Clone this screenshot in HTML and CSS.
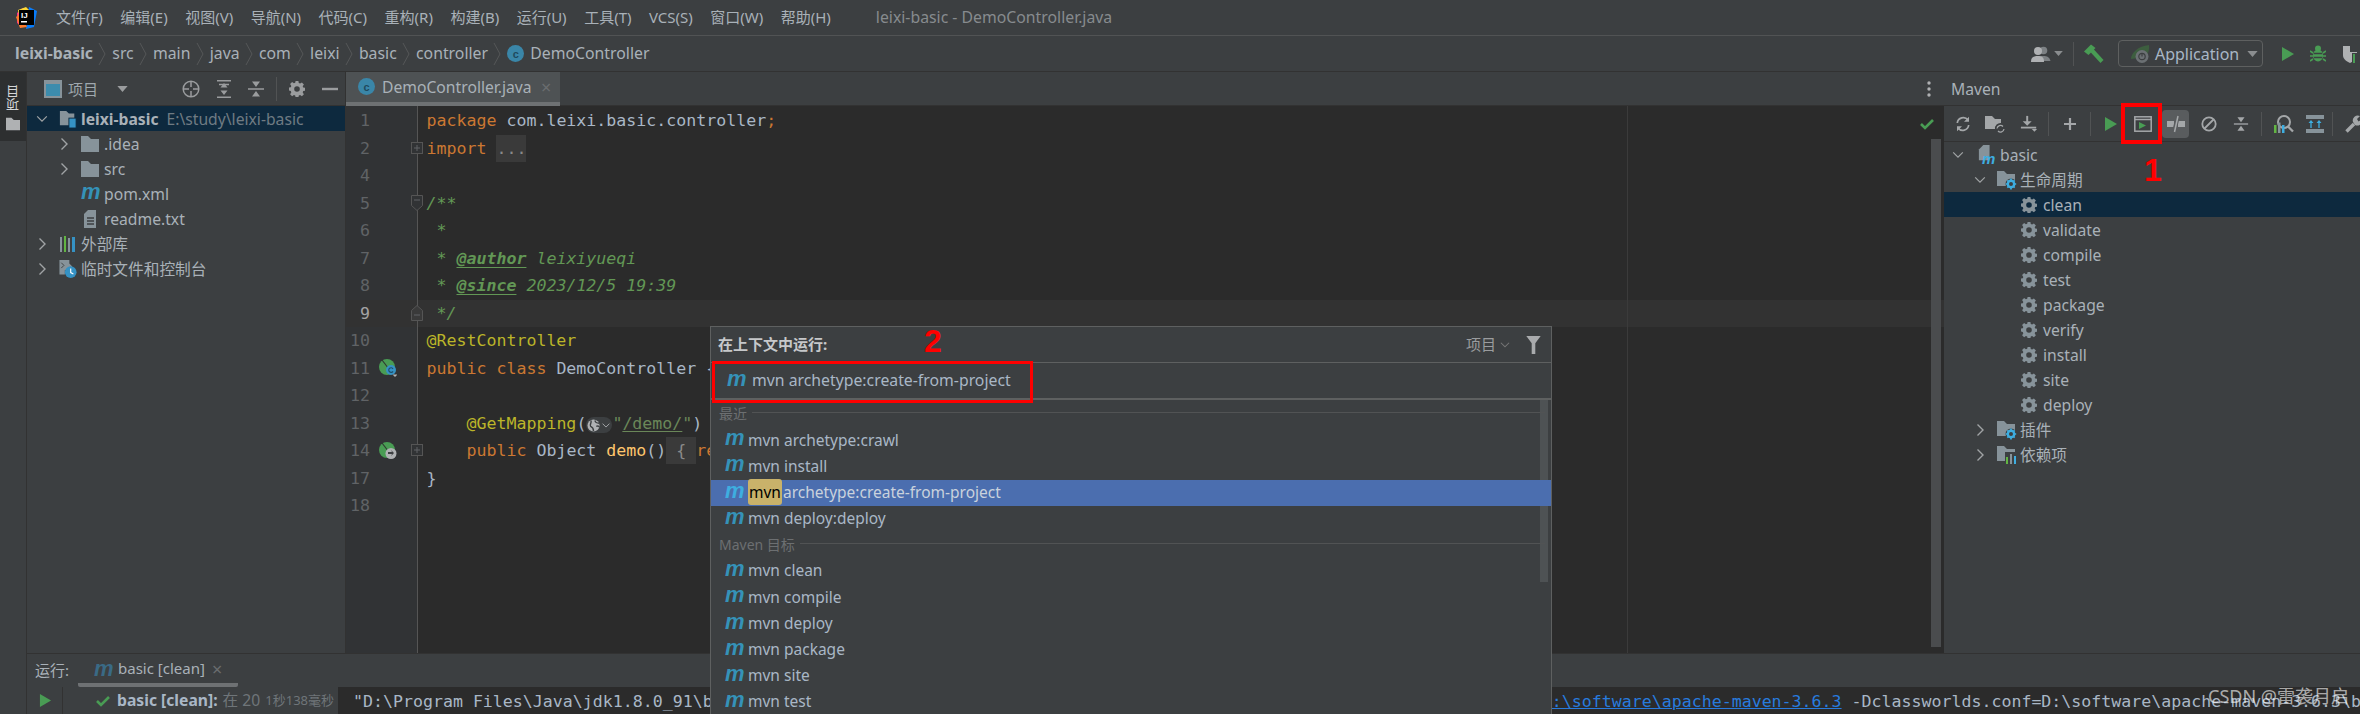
FILE: index.html
```html
<!DOCTYPE html>
<html lang="zh">
<head>
<meta charset="utf-8">
<title>leixi-basic - DemoController.java</title>
<link rel="stylesheet" href="styles.css">
</head>
<body>
<svg class="defs" aria-hidden="true">
  <symbol id="chev-r" viewBox="0 0 10 16"><path d="M2.5 2.5 8 8l-5.5 5.5" fill="none" stroke="currentColor" stroke-width="1.4"/></symbol>
  <symbol id="chev-d" viewBox="0 0 16 10"><path d="M2.5 2 8 7.5 13.500 2" fill="none" stroke="currentColor" stroke-width="1.4"/></symbol>
  <symbol id="crumb" viewBox="0 0 8 24"><path d="M1 1l6 11-6 11" fill="none" stroke="currentColor"/></symbol>
  <symbol id="folder" viewBox="0 0 18 18"><path d="M0 1h7l3 3h8v13H0z" fill="currentColor"/></symbol>
  <symbol id="module" viewBox="0 0 18 20"><path d="M0 1h7l3 3h6v13H0z" fill="#87939a"/><rect x="10" y="9" width="8" height="11" fill="#3592c4" stroke="#0d293e"/></symbol>
  <symbol id="file" viewBox="0 0 14 18"><path d="M5 0h8v18H1V4z" fill="#87939a"/><path d="M4 8h7M4 11h7M4 14h7" stroke="#3c3f41" stroke-width="1.300"/></symbol>
  <symbol id="libs" viewBox="0 0 18 18"><path d="M1 2h2v15H1z" fill="#87939a"/><path d="M5 1h2v16H5z" fill="#62b543"/><path d="M9 3h2v14H9z" fill="#87939a"/><path d="M13 2h3v15h-3z" fill="#3592c4"/></symbol>
  <symbol id="scratch" viewBox="0 0 19 20"><path d="M0 0h11v4l3 3v4H6v5H0z" fill="#87939a"/><path d="M2 3l3 3-3 3" fill="none" stroke="#3c3f41"/><circle cx="12.500" cy="13.500" r="6.500" fill="#3592c4"/><path d="M12.500 9.500v4.500l3 1.500" fill="none" stroke="#fff" stroke-width="1.300"/></symbol>
  <symbol id="gear" viewBox="0 0 16 16"><path fill="currentColor" fill-rule="evenodd" d="M6.600 0h2.800l.4 2.100 1.300.5 1.800-1.200 2 2-1.200 1.800.5 1.300 2.100.4v2.800l-2.100.4-.5 1.300 1.200 1.800-2 2-1.800-1.200-1.300.5-.4 2.100H6.600l-.4-2.100-1.300-.5-1.800 1.200-2-2 1.200-1.800-.5-1.300L-.3 9.400V6.600l2.100-.4.500-1.300L1.100 3.100l2-2 1.800 1.200 1.300-.5zM8 5.200a2.800 2.800 0 1 0 0 5.600 2.800 2.800 0 0 0 0-5.600z"/></symbol>
  <symbol id="lifecycle" viewBox="0 0 20 20"><path d="M0 1h7l3 3h8v12H0z" fill="#87939a"/><circle cx="14" cy="14" r="5.500" fill="#3c3f41"/><circle cx="14" cy="14" r="3.200" fill="none" stroke="#3eaee0" stroke-width="2.400"/><path d="M14 8.500v2M14 17.500v2M8.800 14h2M17.200 14h2M10.300 10.300l1.400 1.400M16.300 16.300l1.400 1.400M17.700 10.300l-1.400 1.400M11.700 16.300l-1.400 1.400" stroke="#3eaee0" stroke-width="1.700"/></symbol>
  <symbol id="deps" viewBox="0 0 20 20"><path d="M0 1h7l3 3h8v12H0z" fill="#87939a"/><rect x="8" y="7" width="12" height="13" fill="#3c3f41"/><path d="M9 12h2v7H9z" fill="#62b543"/><path d="M13 9h2v10h-2z" fill="#87939a"/><path d="M17 11h2v8h-2z" fill="#3eaee0"/></symbol>
  <symbol id="pom" viewBox="0 0 18 20"><path d="M6 0h7v17H1V5z" fill="#87939a"/></symbol>
  <symbol id="tree-win" viewBox="0 0 18 18"><rect width="18" height="18" fill="#87939a"/><rect x="2" y="4" width="14" height="12" fill="#3c8cad"/></symbol>
  <symbol id="locate" viewBox="0 0 18 18"><circle cx="9" cy="9" r="7.800" fill="none" stroke="currentColor" stroke-width="1.500"/><path d="M9 1v6M9 11v6M1 9h6M11 9h6" stroke="currentColor" stroke-width="1.500"/></symbol>
  <symbol id="expand" viewBox="0 0 16 18"><path d="M1 .8h14M1 17.200h14M3 4.500h10" stroke="currentColor" stroke-width="1.500"/><path d="M8 3 4.500 7.500h7zM8 15l-3.500-4.500h7z" fill="currentColor"/></symbol>
  <symbol id="collapse" viewBox="0 0 16 18"><path d="M0 9h16" stroke="currentColor" stroke-width="1.500"/><path d="M8 7 4 1.500h8zM8 11l-4 5.500h8z" fill="currentColor"/></symbol>
  <symbol id="minus" viewBox="0 0 16 4"><rect y=".8" width="16" height="2.400" fill="currentColor"/></symbol>
  <symbol id="dots" viewBox="0 0 4 16"><circle cx="2" cy="2" r="1.700" fill="currentColor"/><circle cx="2" cy="8" r="1.700" fill="currentColor"/><circle cx="2" cy="14" r="1.700" fill="currentColor"/></symbol>
  <symbol id="check" viewBox="0 0 14 12"><path d="M1 6l4 4 8-8" fill="none" stroke="#499c54" stroke-width="2.600"/></symbol>
  <symbol id="play" viewBox="0 0 14 16"><path d="M1 1l12 7-12 7z" fill="#499c54"/></symbol>
  <symbol id="sync" viewBox="0 0 16 16"><path d="M2.300 7A6 6 0 0 1 13 4M13.700 9A6 6 0 0 1 3 12" fill="none" stroke="currentColor" stroke-width="1.700"/><path d="M14 .7v5h-5zM2 15.300v-5h5z" fill="currentColor"/></symbol>
  <symbol id="folder-sync" viewBox="0 0 20 18"><path d="M0 1h7l3 3h6v4a5.500 5.500 0 0 0-6 6H0z" fill="currentColor"/><path d="M12 13.500a3.500 3.500 0 0 1 6-2M19 14a3.500 3.500 0 0 1-6 2" fill="none" stroke="currentColor" stroke-width="1.200"/></symbol>
  <symbol id="download" viewBox="0 0 20 20"><path d="M8 1v8" stroke="currentColor" stroke-width="2.200"/><path d="M3 7h10l-5 5z" fill="currentColor"/><path d="M1 14h17" stroke="currentColor" stroke-width="2"/><path d="M13 15.500h6l-3 3z" fill="currentColor"/></symbol>
  <symbol id="plus" viewBox="0 0 14 14"><path d="M7 1v12M1 7h12" stroke="currentColor" stroke-width="2.200"/></symbol>
  <symbol id="exec" viewBox="0 0 18 16"><rect x=".8" y=".8" width="16.400" height="14.400" fill="none" stroke="currentColor" stroke-width="1.500"/><path d="M1 3.500h16" stroke="currentColor" stroke-width="1.500"/><path d="M5 6l7 3.500-7 3.500z" fill="#499c54"/></symbol>
  <symbol id="toggle" viewBox="0 0 18 18"><path d="M0 6h7v6H0zM11 6h7v6h-7z" fill="currentColor"/><path d="M7 17 11 1" stroke="#595c5e" stroke-width="4"/><path d="M7.500 17 11 1" stroke="currentColor" stroke-width="1.500"/></symbol>
  <symbol id="skip" viewBox="0 0 16 16"><circle cx="8" cy="8" r="6.700" fill="none" stroke="currentColor" stroke-width="1.800"/><path d="M3.500 12.500l9-9" stroke="currentColor" stroke-width="1.800"/></symbol>
  <symbol id="analyze" viewBox="0 0 20 20"><circle cx="10" cy="8" r="6" fill="none" stroke="currentColor" stroke-width="2"/><path d="M14 12.500l5 5" stroke="currentColor" stroke-width="2.300"/><rect x="0" y="11" width="2.500" height="8" fill="#62b543"/><rect x="4" y="8.500" width="2.500" height="10.500" fill="#87939a"/><rect x="8" y="11" width="2.500" height="8" fill="#3eaee0"/></symbol>
  <symbol id="align" viewBox="0 0 18 18"><rect width="18" height="4" fill="#87939a"/><rect y="14" width="18" height="4" fill="#87939a"/><path d="M5 6.500V13M13 6.500V13" stroke="#3eaee0" stroke-width="1.300"/><path d="M5 5l-2.500 3h5zM13 5l-2.500 3h5z" fill="#3eaee0"/></symbol>
  <symbol id="wrench" viewBox="0 0 18 18"><path d="M1.500 16.500 9 9" stroke="currentColor" stroke-width="3.400"/><path d="M8 7a5 5 0 0 1 7-6l-3 3 1.500 2.500L17 4a5 5 0 0 1-7 6z" fill="currentColor"/></symbol>
  <symbol id="user" viewBox="0 0 20 16"><circle cx="12.500" cy="4.500" r="3.800" fill="#7d8184"/><path d="M7 15c0-4 2-5 5.500-5s6 1 7 5z" fill="#7d8184"/><circle cx="7" cy="5" r="4" fill="currentColor"/><path d="M0 16c0-5 3-6 7-6s6 1 6 6z" fill="currentColor"/></symbol>
  <symbol id="hammer" viewBox="0 0 20 20"><path d="M7 5.500l11 12" stroke="#499c54" stroke-width="4.200"/><path d="M0 7.500 7 .5l4.500 3.500-7 7z" fill="#499c54"/></symbol>
  <symbol id="bug" viewBox="0 0 16 18"><ellipse cx="8" cy="10.500" rx="5" ry="6" fill="#499c54"/><circle cx="8" cy="3.500" r="3" fill="#499c54"/><path d="M0 6l3 2M16 6l-3 2M0 11h3M16 11h-3M0 16l3-2M16 16l-3-2" stroke="#499c54" stroke-width="1.600"/><path d="M4 8.500h8M4 12.500h8" stroke="#3c3f41" stroke-width="1.300"/></symbol>
  <symbol id="shield" viewBox="0 0 18 20"><path d="M1 2h14v9c0 4-3 6-7 8-4-2-7-4-7-8z" fill="#afb1b3"/><path d="M8 2h7v6H8z" fill="#3c3f41"/><path d="M10 9h8v11h-8z" fill="#3c3f41"/><path d="M12 10v9" stroke="#499c54" stroke-width="2"/></symbol>
  <symbol id="gutter-class" viewBox="0 0 18 18"><circle cx="8" cy="8" r="8" fill="#499c54"/><path d="M3 1l10 13" stroke="#2f3a30" stroke-width="1.200"/><circle cx="12" cy="11" r="5" fill="#3592c4"/><path d="M14 9.800a2.300 2.300 0 1 0 0 2.500" fill="none" stroke="#1f4f6a" stroke-width="1.200"/><path d="M13.500 15.500h5l-2.500 2.500z" fill="#afb1b3"/></symbol>
  <symbol id="gutter-web" viewBox="0 0 18 18"><circle cx="8" cy="8" r="8" fill="#499c54"/><path d="M3 1l10 13" stroke="#2f3a30" stroke-width="1.200"/><circle cx="12" cy="11.500" r="5.500" fill="#afb1b3"/><path d="M9 10h4l-1-2 3 3-3 3 1-2H9z" fill="#3c3f41"/></symbol>
  <symbol id="globe" viewBox="0 0 14 14"><circle cx="7" cy="7" r="6.500" fill="#afb1b3"/><path d="M4 1.500C6 4 2 6 4 8c2 1 3 2 3 5M9 1.500c-1 2 2 3 4 3M10 8c2-1 3 0 3 1" fill="none" stroke="#3c3f41" stroke-width="1.500"/></symbol>
  <symbol id="funnel" viewBox="0 0 16 20"><path d="M0 0h16L10 8v12H6V8z" fill="currentColor"/></symbol>
  <symbol id="caret" viewBox="0 0 12 7"><path d="M0 0h12L6 7z" fill="currentColor"/></symbol>
  <symbol id="fold-plus" viewBox="0 0 12 12"><rect x=".5" y=".5" width="11" height="11" fill="#313335" stroke="#555"/><path d="M3 6h6M6 3v6" stroke="#606366"/></symbol>
  <symbol id="fold-start" viewBox="0 0 12 16"><path d="M.5.500h11v10L6 15.500.5 10.500z" fill="#313335" stroke="#555"/><path d="M3 5h6" stroke="#606366"/></symbol>
  <symbol id="fold-end" viewBox="0 0 12 16"><path d="M.5 15.500h11v-10L6 .5.5 5.500z" fill="#3a3a3a" stroke="#555"/><path d="M3 10h6" stroke="#606366"/></symbol>
  <symbol id="spring-run" viewBox="0 0 20 18"><path d="M0 14C0 8 7 1 18 0c1 8-3 13-10 13z" fill="#3d5e3f"/><circle cx="11" cy="11.500" r="6.500" fill="#6b7073"/><circle cx="11" cy="11.500" r="3.200" fill="none" stroke="#3c3f41" stroke-width="1.200"/><path d="M11 8.500v3" stroke="#3c3f41" stroke-width="1.200"/></symbol>
</svg>

<div class="app">
  <header class="menubar">
    <svg class="logo" viewBox="0 0 22 22" aria-hidden="true">
      <path d="M2 6 8 1l6 2-8 16-4-3z" fill="#fc318c"/>
      <path d="M14 0l8 4-3 16-8 2z" fill="#087cfa"/>
      <path d="M1 10l5-4 6 14-7 1z" fill="#fe7b2e"/>
      <path d="M3 3l8-3 4 4-11 5z" fill="#fdd935"/>
      <rect x="4" y="3" width="15" height="15" fill="#000"/>
      <text x="6" y="11" class="logo-text">IJ</text>
      <rect x="6" y="14" width="6" height="1.500" fill="#fff"/>
    </svg>
    <nav class="menu">
      <span>文件(F)</span><span>编辑(E)</span><span>视图(V)</span><span>导航(N)</span><span>代码(C)</span><span>重构(R)</span><span>构建(B)</span><span>运行(U)</span><span>工具(T)</span><span>VCS(S)</span><span>窗口(W)</span><span>帮助(H)</span>
    </nav>
    <span class="win-title">leixi-basic - DemoController.java</span>
  </header>

  <div class="navbar">
    <div class="crumbs">
      <b class="crumb-root">leixi-basic</b>
      <svg class="crumb-sep"><use href="#crumb"/></svg><span>src</span>
      <svg class="crumb-sep"><use href="#crumb"/></svg><span>main</span>
      <svg class="crumb-sep"><use href="#crumb"/></svg><span>java</span>
      <svg class="crumb-sep"><use href="#crumb"/></svg><span>com</span>
      <svg class="crumb-sep"><use href="#crumb"/></svg><span>leixi</span>
      <svg class="crumb-sep"><use href="#crumb"/></svg><span>basic</span>
      <svg class="crumb-sep"><use href="#crumb"/></svg><span>controller</span>
      <svg class="crumb-sep"><use href="#crumb"/></svg><i class="class-ic">c</i><span class="crumb-class">DemoController</span>
    </div>
    <div class="run-tools">
      <svg class="ic-user"><use href="#user"/></svg>
      <svg class="ic-caret"><use href="#caret"/></svg>
      <span class="tool-sep"></span>
      <svg class="ic-hammer"><use href="#hammer"/></svg>
      <div class="run-config">
        <svg class="ic-spring"><use href="#spring-run"/></svg>
        <span>Application</span>
        <svg class="ic-caret"><use href="#caret"/></svg>
      </div>
      <svg class="ic-run"><use href="#play"/></svg>
      <svg class="ic-bug"><use href="#bug"/></svg>
      <svg class="ic-shield"><use href="#shield"/></svg>
    </div>
  </div>

  <div class="body">
    <aside class="stripe">
      <div class="stripe-tab">
        <span class="stripe-label">项目</span>
        <svg class="stripe-folder"><use href="#folder"/></svg>
      </div>
    </aside>

    <div class="content">
      <div class="workspace">
        <section class="project">
          <div class="proj-head">
            <svg class="ph-win"><use href="#tree-win"/></svg>
            <span class="ph-title">项目</span>
            <svg class="ph-caret"><use href="#caret"/></svg>
            <svg class="ph-ic ph-locate"><use href="#locate"/></svg>
            <svg class="ph-ic ph-exp"><use href="#expand"/></svg>
            <svg class="ph-ic ph-col"><use href="#collapse"/></svg>
            <span class="ph-sep"></span>
            <svg class="ph-ic ph-gear"><use href="#gear"/></svg>
            <svg class="ph-minus"><use href="#minus"/></svg>
          </div>
          <div class="ptree">
            <div class="prow sel"><svg class="chev chev-down"><use href="#chev-d"/></svg><svg class="pic"><use href="#module"/></svg><b class="pname">leixi-basic</b><span class="ppath">E:\study\leixi-basic</span></div>
            <div class="prow lv1"><svg class="chev"><use href="#chev-r"/></svg><svg class="pic"><use href="#folder"/></svg><span class="dotname">.idea</span></div>
            <div class="prow lv1"><svg class="chev"><use href="#chev-r"/></svg><svg class="pic"><use href="#folder"/></svg><span class="dotname">src</span></div>
            <div class="prow lv1"><span class="chev"></span><span class="m m-tree">m</span><span class="dotname">pom.xml</span></div>
            <div class="prow lv1"><span class="chev"></span><svg class="pic"><use href="#file"/></svg><span class="dotname">readme.txt</span></div>
            <div class="prow"><svg class="chev"><use href="#chev-r"/></svg><svg class="pic"><use href="#libs"/></svg><span class="ptext">外部库</span></div>
            <div class="prow"><svg class="chev"><use href="#chev-r"/></svg><svg class="pic"><use href="#scratch"/></svg><span class="ptext">临时文件和控制台</span></div>
          </div>
        </section>

        <section class="editor-col">
          <div class="tabbar">
            <div class="tab"><i class="class-ic">c</i><span class="tab-name">DemoController.java</span><span class="tab-x">×</span></div>
            <svg class="ic-dots"><use href="#dots"/></svg>
          </div>
          <div class="editor">
            <div class="gutter">
              <div class="gl"><span class="ln">1</span></div>
              <div class="gl"><span class="ln">2</span><svg class="fold"><use href="#fold-plus"/></svg></div>
              <div class="gl"><span class="ln">4</span></div>
              <div class="gl"><span class="ln">5</span><svg class="fold fold-tall"><use href="#fold-start"/></svg></div>
              <div class="gl"><span class="ln">6</span></div>
              <div class="gl"><span class="ln">7</span></div>
              <div class="gl"><span class="ln">8</span></div>
              <div class="gl cur"><span class="ln">9</span><svg class="fold fold-tall"><use href="#fold-end"/></svg></div>
              <div class="gl"><span class="ln">10</span></div>
              <div class="gl"><span class="ln">11</span><svg class="gmark"><use href="#gutter-class"/></svg></div>
              <div class="gl"><span class="ln">12</span></div>
              <div class="gl"><span class="ln">13</span></div>
              <div class="gl"><span class="ln">14</span><svg class="gmark"><use href="#gutter-web"/></svg><svg class="fold"><use href="#fold-plus"/></svg></div>
              <div class="gl"><span class="ln">17</span></div>
              <div class="gl"><span class="ln">18</span></div>
            </div>
            <div class="code">
              <div class="cl"><span class="kw">package</span> com.leixi.basic.controller<span class="kw">;</span></div>
              <div class="cl"><span class="kw">import</span> <span class="foldchip">...</span></div>
              <div class="cl"></div>
              <div class="cl cm">/**</div>
              <div class="cl cm"> *</div>
              <div class="cl cm"> * <span class="tag">@author</span> leixiyueqi</div>
              <div class="cl cm"> * <span class="tag">@since</span> 2023/12/5 19:39</div>
              <div class="cl cm cur"> */</div>
              <div class="cl ann">@RestController</div>
              <div class="cl"><span class="kw">public class</span> DemoController {</div>
              <div class="cl"></div>
              <div class="cl">    <span class="ann">@GetMapping</span>(<span class="chip"><svg class="chip-globe"><use href="#globe"/></svg><svg class="chip-chev"><use href="#chev-d"/></svg></span><span class="str">"<u>/demo/</u>"</span>)</div>
              <div class="cl">    <span class="kw">public</span> Object <span class="fn">demo</span>()<span class="foldchip"> { </span><span class="kw">return</span> <span class="str">"demo"</span>; }</div>
              <div class="cl">}</div>
              <div class="cl"></div>
            </div>
            <div class="margin-line"></div>
            <svg class="ok-mark"><use href="#check"/></svg>
            <div class="ed-scroll"></div>
          </div>
        </section>

        <section class="maven">
          <div class="mv-head"><span>Maven</span></div>
          <div class="mv-tools">
            <svg class="mt"><use href="#sync"/></svg>
            <svg class="mt mt-wide"><use href="#folder-sync"/></svg>
            <svg class="mt mt-wide"><use href="#download"/></svg>
            <span class="mt-sep"></span>
            <svg class="mt mt-plus"><use href="#plus"/></svg>
            <span class="mt-sep"></span>
            <svg class="mt mt-play"><use href="#play"/></svg>
            <svg class="mt mt-exec"><use href="#exec"/></svg>
            <span class="mt-on"><svg class="mt-toggle"><use href="#toggle"/></svg></span>
            <svg class="mt mt-skip"><use href="#skip"/></svg>
            <svg class="mt mt-col"><use href="#collapse"/></svg>
            <span class="mt-sep"></span>
            <svg class="mt mt-an"><use href="#analyze"/></svg>
            <svg class="mt mt-al"><use href="#align"/></svg>
            <span class="mt-sep"></span>
            <svg class="mt mt-wr"><use href="#wrench"/></svg>
          </div>
          <div class="mtree">
            <div class="mrow m0"><svg class="chev chev-down"><use href="#chev-d"/></svg><span class="pom-ic"><svg class="pom-file"><use href="#pom"/></svg><span class="m m-pom">m</span></span><span class="mtext">basic</span></div>
            <div class="mrow m1"><svg class="chev chev-down"><use href="#chev-d"/></svg><svg class="mfolder"><use href="#lifecycle"/></svg><span class="mtext">生命周期</span></div>
            <div class="mrow m2 sel"><svg class="mgear"><use href="#gear"/></svg><span class="mtext">clean</span></div>
            <div class="mrow m2"><svg class="mgear"><use href="#gear"/></svg><span class="mtext">validate</span></div>
            <div class="mrow m2"><svg class="mgear"><use href="#gear"/></svg><span class="mtext">compile</span></div>
            <div class="mrow m2"><svg class="mgear"><use href="#gear"/></svg><span class="mtext">test</span></div>
            <div class="mrow m2"><svg class="mgear"><use href="#gear"/></svg><span class="mtext">package</span></div>
            <div class="mrow m2"><svg class="mgear"><use href="#gear"/></svg><span class="mtext">verify</span></div>
            <div class="mrow m2"><svg class="mgear"><use href="#gear"/></svg><span class="mtext">install</span></div>
            <div class="mrow m2"><svg class="mgear"><use href="#gear"/></svg><span class="mtext">site</span></div>
            <div class="mrow m2"><svg class="mgear"><use href="#gear"/></svg><span class="mtext">deploy</span></div>
            <div class="mrow m1"><svg class="chev"><use href="#chev-r"/></svg><svg class="mfolder"><use href="#lifecycle"/></svg><span class="mtext">插件</span></div>
            <div class="mrow m1"><svg class="chev"><use href="#chev-r"/></svg><svg class="mfolder"><use href="#deps"/></svg><span class="mtext">依赖项</span></div>
          </div>
        </section>
      </div>

      <section class="bottom">
        <div class="run-head">
          <span class="run-label">运行:</span>
          <div class="run-tab"><span class="m m-run">m</span><span>basic [clean]</span><span class="tab-x">×</span></div>
        </div>
        <div class="run-body">
          <div class="run-gutter"><svg class="rg-play"><use href="#play"/></svg></div>
          <div class="run-tree"><svg class="rt-check"><use href="#check"/></svg><b>basic [clean]:</b><span class="rt-time">在 20</span><span class="rt-dur">1秒138毫秒</span></div>
          <div class="console">"D:\Program Files\Java\jdk1.8.0_91\bin\java.exe" -Dmaven.multiModuleProjectDirectory=E:\study\leixi-basic -Dmaven.home=<a class="link">D:\software\apache-maven-3.6.3</a> -Dclassworlds.conf=D:\software\apache-maven-3.6.3\bin\m2.conf</div>
        </div>
      </section>
    </div>
  </div>

  <div class="popup">
    <div class="pop-head"><b class="pop-title">在上下文中运行:</b><span class="pop-scope">项目</span><svg class="pop-chev"><use href="#chev-d"/></svg><svg class="pop-funnel"><use href="#funnel"/></svg></div>
    <div class="pop-search"><span class="m m-search">m</span><span>mvn archetype:create-from-project</span></div>
    <div class="pop-scroll"></div>
    <div class="pop-list">
      <div class="pop-group"><span>最近</span><i></i></div>
      <div class="pop-row"><span class="m">m</span><span>mvn archetype:crawl</span></div>
      <div class="pop-row"><span class="m">m</span><span>mvn install</span></div>
      <div class="pop-row active"><span class="m">m</span><span><mark>mvn</mark> archetype:create-from-project</span></div>
      <div class="pop-row"><span class="m">m</span><span>mvn deploy:deploy</span></div>
      <div class="pop-group"><span>Maven 目标</span><i></i></div>
      <div class="pop-row"><span class="m">m</span><span>mvn clean</span></div>
      <div class="pop-row"><span class="m">m</span><span>mvn compile</span></div>
      <div class="pop-row"><span class="m">m</span><span>mvn deploy</span></div>
      <div class="pop-row"><span class="m">m</span><span>mvn package</span></div>
      <div class="pop-row"><span class="m">m</span><span>mvn site</span></div>
      <div class="pop-row"><span class="m">m</span><span>mvn test</span></div>
    </div>
  </div>

  <div class="mark-box box-1"></div>
  <div class="mark-num num-1">1</div>
  <div class="mark-box box-2"></div>
  <div class="mark-num num-2">2</div>
  <div class="watermark">CSDN @雷袭月启</div>
</div>
</body>
</html>
```

FILE: styles.css
```css
* { box-sizing: border-box; }
html, body { margin: 0; padding: 0; }
body { background: #3c3f41; }
.defs { position: absolute; width: 0; height: 0; }
.app {
  position: relative;
  width: 2360px;
  height: 714px;
  overflow: hidden;
  display: flex;
  flex-direction: column;
  background: #3c3f41;
  color: #a9b1b8;
  font: 15.7px/1 "Noto Sans", "Noto Sans CJK SC", sans-serif;
}
svg { display: block; flex: none; }
u { text-underline-offset: 2px; }

/* menu */
.menubar {
  height: 36px;
  flex: none;
  display: flex;
  align-items: center;
  border-bottom: 1px solid #515354;
  padding-left: 15px;
}
.logo { width: 22px; height: 22px; }
.logo-text { font: bold 8px "Liberation Sans", sans-serif; fill: #fff; }
.menu { display: flex; gap: 17.5px; margin-left: 19px; font-size: 15px; }
.win-title { margin-left: 45px; font-size: 15.8px; color: #878b8e; }

/* nav bar */
.navbar {
  height: 36px;
  flex: none;
  display: flex;
  align-items: center;
  justify-content: space-between;
  border-bottom: 1px solid #323232;
  padding-left: 15px;
}
.crumbs { display: flex; align-items: center; font-size: 15.8px; }
.crumb-root { font-weight: 700; }
.crumb-sep { width: 8px; height: 24px; margin: 0 6px 0 5.3px; color: #555758; }
.class-ic {
  width: 17px; height: 17px;
  border-radius: 50%;
  background: #3a86a8;
  color: #1f4a5e;
  display: flex; align-items: center; justify-content: center;
  font: 700 11px "Liberation Sans", sans-serif;
  flex: none;
}
.crumb-class { margin-left: 6px; }
.run-tools { display: flex; align-items: center; width: 329px; height: 100%; overflow: hidden; flex: none; }
.ic-user { width: 20px; height: 16px; color: #afb1b3; }
.ic-caret { width: 9px; height: 5px; color: #8a8d8f; }
.run-tools > .ic-caret { margin-left: 3px; }
.tool-sep { width: 1px; height: 24px; background: #515354; margin-left: 10px; }
.ic-hammer { width: 20px; height: 20px; margin-left: 10px; }
.run-config {
  width: 152px; height: 27px;
  margin-left: 14px;
  border: 1px solid #5e6060;
  border-radius: 4px;
  display: flex; align-items: center;
  padding-left: 12px;
  color: #a9b7c6;
  font-size: 16px;
}
.run-config span { margin-left: 4px; width: 84px; }
.run-config .ic-caret { width: 11px; height: 6px; margin-left: 8px; }
.ic-spring { width: 20px; height: 18px; }
.ic-run { width: 14px; height: 16px; margin-left: 18px; }
.ic-bug { width: 16px; height: 18px; margin-left: 15px; }
.ic-shield { width: 18px; height: 20px; margin-left: 16px; }

/* body */
.body { flex: 1; min-height: 0; display: flex; }
.stripe { width: 27px; flex: none; border-right: 1px solid #323232; }
.stripe-tab {
  height: 69px;
  background: #2d2f30;
  display: flex; flex-direction: column; align-items: center;
  padding-top: 13px;
  color: #d4d6d8;
}
.stripe-label { writing-mode: vertical-rl; transform: rotate(180deg); font-size: 13px; line-height: 14px; }
.stripe-folder { width: 14px; height: 14px; margin-top: 6px; color: #afb1b3; }
.content { flex: 1; min-width: 0; display: flex; flex-direction: column; }
.workspace { height: 581px; flex: none; display: flex; min-height: 0; }

/* project */
.project { width: 319px; flex: none; border-right: 1px solid #323232; }
.proj-head {
  height: 34px;
  display: flex; align-items: center;
  padding-left: 17px;
  border-bottom: 1px solid #323232;
}
.ph-win { width: 18px; height: 18px; }
.ph-title { margin-left: 6px; font-size: 15px; color: #9fa8ae; padding-top: 2px; }
.ph-caret { width: 11px; height: 6px; margin-left: 19px; color: #9a9c9e; }
.ph-ic { width: 18px; height: 18px; color: #9a9c9e; }
.ph-locate { margin-left: 54px; }
.ph-exp { width: 16px; margin-left: 16px; }
.ph-col { width: 16px; margin-left: 16px; }
.ph-sep { width: 1px; height: 24px; background: #515354; margin-left: 12px; }
.ph-gear { width: 16px; height: 16px; margin-left: 12px; }
.ph-minus { width: 16px; height: 4px; margin-left: 17px; color: #9a9c9e; }
.prow { height: 25px; display: flex; align-items: center; padding-left: 10px; }
.prow.sel { background: #0d293e; }
.prow.lv1 { padding-left: 32px; }
.chev { width: 10px; height: 16px; color: #a0a3a5; flex: none; }
.chev-down { width: 14px; height: 10px; margin: 0 -2px; }
.pic { width: 18px; height: 18px; margin: 0 4px 0 12px; color: #87939a; }
.pname { font-weight: 700; padding-top: 2px; }
.ppath { margin-left: 8px; color: #6f7b83; padding-top: 2px; }
.ptext { padding-top: 2px; }
.dotname { margin-left: 1px; padding-top: 2px; }
.m {
  font: italic 700 22px/1 "Liberation Sans", sans-serif;
  color: #3592b8;
  letter-spacing: -1px;
  width: 18px;
  flex: none;
  display: block;
  position: relative;
  top: -2px;
}
.m-tree { margin: 0 4px 0 12px; }

/* editor */
.editor-col { flex: 1; min-width: 0; display: flex; flex-direction: column; }
.tabbar { height: 34px; flex: none; display: flex; align-items: center; justify-content: space-between; border-bottom: 1px solid #323232; padding-right: 13px; }
.tab {
  width: 214px; height: 34px;
  display: flex; align-items: center;
  padding-left: 12px;
  background: #4e5254;
  border-bottom: 4px solid #6e7173;
}
.tab-name { margin-left: 7px; width: 153px; white-space: nowrap; padding-top: 3px; }
.tab-x { color: #6a6d6f; font-size: 18px; margin-left: 6px; }
.ic-dots { width: 4px; height: 16px; color: #afb1b3; }
.editor { flex: 1; position: relative; display: flex; min-height: 0; background: #2b2b2b; font: 16.6px/27.5px "DejaVu Sans Mono", monospace; }
.gutter { width: 72px; flex: none; background: #313335; border-right: 1px solid #555; color: #606366; padding-top: 1px; }
.gl { height: 27.5px; display: flex; align-items: center; position: relative; }
.gl.cur { background: #323232; color: #a4a3a3; }
.ln { width: 24px; text-align: right; }
.gmark { width: 18px; height: 18px; margin-left: 9px; }
.fold { width: 12px; height: 12px; position: absolute; right: -6px; top: 7px; z-index: 2; }
.fold-tall { height: 16px; top: 5px; }
.code { flex: 1; min-width: 0; color: #a9b7c6; overflow: hidden; padding-top: 1px; }
.cl { height: 27.5px; padding-left: 8.5px; white-space: pre; }
.cl.cur { background: #323232; }
.kw { color: #cc7832; }
.ann { color: #bbb529; }
.cm { color: #629755; font-style: italic; }
.tag { font-weight: 700; text-decoration: underline; text-underline-offset: 3px; }
.str { color: #6a8759; }
.fn { color: #ffc66d; }
.foldchip { background: #3a3a3a; color: #8a8a8a; display: inline-block; height: 27px; }
.chip { display: inline-flex; align-items: center; vertical-align: -3px; width: 26px; height: 16px; background: #3c3f41; border-radius: 8px; padding-left: 1px; }
.chip-globe { width: 13px; height: 13px; }
.chip-chev { width: 10px; height: 7px; margin-left: 1px; color: #afb1b3; }
.margin-line { position: absolute; left: 1281px; top: 0; bottom: 0; width: 1px; background: #3b3b3b; }
.ok-mark { position: absolute; right: 10px; top: 12px; width: 14px; height: 12px; }
.ed-scroll { position: absolute; right: 3px; top: 33px; bottom: 6px; width: 10px; background: #4a4c4e; }

/* maven */
.maven { width: 416px; flex: none; }
.mv-head { height: 34px; display: flex; align-items: center; padding-left: 7px; color: #a9b1b8; border-bottom: 1px solid #323232; }
.mv-head span { padding-top: 2px; }
.mv-tools { height: 36px; display: flex; align-items: center; padding-left: 11px; color: #a4a7a9; border-bottom: 1px solid #323232; overflow: hidden; }
.mt { width: 16px; height: 16px; }
.mt-wide { width: 20px; height: 18px; margin-left: 14px; }
.mt-sep { width: 1px; height: 24px; background: #515354; flex: none; }
.mv-tools .mt-wide + .mt-sep { margin-left: 9px; }
.mt-plus { width: 14px; height: 14px; margin: 0 13px 0 14px; }
.mt-play { width: 14px; height: 16px; margin-left: 13px; }
.mt-exec { width: 18px; height: 16px; margin-left: 16px; }
.mt-on { width: 27px; height: 28px; margin-left: 10px; border-radius: 4px; background: #595c5e; display: flex; align-items: center; justify-content: center; flex: none; }
.mt-toggle { width: 18px; height: 18px; }
.mt-skip { margin-left: 12px; }
.mt-col { margin-left: 16px; }
.mt-col + .mt-sep { margin-left: 12px; }
.mt-an { width: 20px; height: 20px; margin-left: 12px; }
.mt-al { width: 18px; height: 18px; margin-left: 12px; }
.mt-al + .mt-sep { margin-left: 8px; }
.mt-wr { width: 18px; height: 18px; margin-left: 12px; }
.mrow { height: 25px; display: flex; align-items: center; color: #a9b1b8; }
.mrow.sel { background: #0d293e; }
.m0 { padding-left: 9px; }
.m1 { padding-left: 31px; }
.m2 { padding-left: 77px; }
.pom-ic { width: 18px; height: 20px; margin: 0 4px 0 15px; position: relative; flex: none; }
.pom-file { width: 16px; height: 18px; }
.m-pom { position: absolute; left: 4px; top: 6px; font-size: 15px; width: 14px; letter-spacing: 0; color: #3eaee0; }
.mtext { padding-top: 2px; }
.mfolder { width: 20px; height: 20px; margin: 0 3px 0 12px; }
.mgear { width: 16px; height: 16px; margin-right: 6px; color: #87939a; }

/* bottom */
.bottom { flex: 1; min-height: 0; border-top: 1px solid #323232; display: flex; flex-direction: column; }
.run-head { height: 33px; flex: none; display: flex; font-size: 15px; }
.run-label { margin-left: 8px; width: 43px; align-self: center; }
.run-tab { width: 160px; display: flex; align-items: center; padding-left: 16px; border-bottom: 4px solid #6e7173; border-radius: 0 0 2px 2px; }
.m-run { color: #3a6a85; margin-right: 6px; top: 0; }
.run-tab .tab-x { margin-left: 7px; }
.run-body { flex: 1; min-height: 0; display: flex; }
.run-gutter { width: 36px; flex: none; border-right: 1px solid #323232; display: flex; align-items: center; padding-left: 12px; }
.rg-play { width: 13px; height: 15px; }
.run-tree { width: 275px; flex: none; display: flex; align-items: center; padding-left: 33px; white-space: nowrap; }
.rt-check { width: 14px; height: 12px; margin-right: 7px; }
.run-tree b { color: #a9b7c6; }
.rt-time { margin-left: 5px; color: #6f7579; }
.rt-dur { margin-left: 5px; font-size: 13px; color: #6f7579; }
.console {
  flex: 1; min-width: 0;
  background: #2b2b2b;
  padding-left: 15px;
  white-space: pre;
  overflow: hidden;
  font: 16.6px/29px "DejaVu Sans Mono", monospace;
  color: #a9b7c6;
}
.link { color: #287bde; text-decoration: underline; }

/* popup */
.popup {
  position: absolute;
  left: 710px; top: 326px;
  width: 842px; height: 400px;
  background: #3c3f41;
  border: 1px solid #5e6060;
  font-size: 15.5px;
  color: #a9b7c6;
}
.pop-head { height: 36px; display: flex; align-items: center; padding-left: 7px; border-bottom: 1px solid #5e6060; }
.pop-title { color: #c6c8ca; font-size: 15px; }
.pop-scope { margin-left: auto; font-size: 15px; color: #9a9c9e; }
.pop-chev { width: 12px; height: 8px; margin-left: 3px; color: #777; }
.pop-funnel { width: 15px; height: 18px; margin: 0 10px 0 15px; color: #a9abad; }
.pop-search { height: 37px; display: flex; align-items: center; padding-left: 16px; border-bottom: 2px solid #5e6060; font-size: 15.8px; }
.m-search { margin-right: 7px; }
.pop-list { padding-top: 1px; position: relative; z-index: 1; }
.pop-group { height: 26.2px; display: flex; align-items: center; gap: 5px; padding: 0 6px 0 8px; color: #6c6f71; font-size: 14px; }
.pop-group i { flex: 1; height: 1px; background: #515354; margin-top: -4px; }
.pop-row { height: 26.2px; display: flex; align-items: center; padding-left: 14px; gap: 5px; }
.pop-row.active { background: #4b6eaf; color: #c9d2dd; }
.pop-row.active .m { color: #3eaee0; }
mark { background: #c9b26a; color: #000; border-radius: 3px; padding: 2px 1px; margin-right: -3px; }
.pop-scroll { position: absolute; right: 3px; top: 73px; width: 8px; height: 182px; background: #4e5254; }

/* annotations */
.mark-box { position: absolute; border: 3px solid #f00; z-index: 5; }
.box-1 { left: 2121px; top: 103px; width: 41px; height: 41px; border-width: 4px; }
.box-2 { left: 712px; top: 361px; width: 321px; height: 42px; }
.mark-num { position: absolute; z-index: 5; color: #f00; font: 700 32px/1 "Liberation Sans", sans-serif; }
.num-1 { left: 2144px; top: 154px; }
.num-2 { left: 924px; top: 325px; }
.watermark { position: absolute; left: 2208px; top: 684px; font-size: 18px; line-height: 24px; color: rgba(255,255,255,.62); white-space: nowrap; z-index: 6; }
```
